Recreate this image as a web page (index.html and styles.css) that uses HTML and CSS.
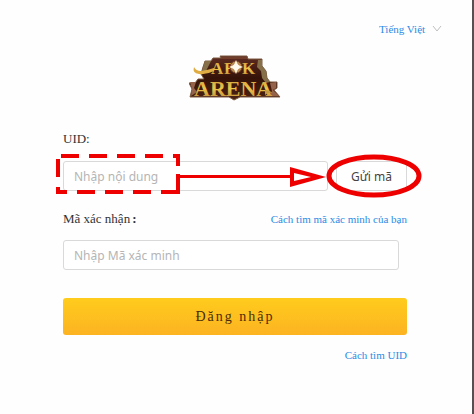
FILE: index.html
```html
<!DOCTYPE html>
<html lang="vi">
<head>
    <meta charset="UTF-8">
    <meta name="viewport" content="width=device-width, initial-scale=1.0">
    <title>AFK Arena</title>
    <link rel="stylesheet" href="styles.css">
</head>
<body>
    <main class="page">
        <div class="language">
            <select class="language-select" aria-label="Ngôn ngữ">
                <option>Tiếng Việt</option>
            </select>
            <svg class="chevron" width="10" height="8" viewBox="0 0 10 8" aria-hidden="true">
                <path d="M1 1l4 5 4-5" fill="none" stroke="#bfbfbf" stroke-width="1"/>
            </svg>
        </div>

        <svg class="logo" width="92" height="46" viewBox="0 0 92 46" role="img" aria-label="AFK Arena">
            <defs>
                <linearGradient id="gold" x1="0" y1="0" x2="0" y2="1">
                    <stop offset="0" stop-color="#c9963a"/>
                    <stop offset="0.5" stop-color="#ecc44a"/>
                    <stop offset="1" stop-color="#b98335"/>
                </linearGradient>
                <linearGradient id="wood" x1="0" y1="0" x2="0" y2="1">
                    <stop offset="0" stop-color="#5e2c22"/>
                    <stop offset="0.5" stop-color="#351208"/>
                    <stop offset="1" stop-color="#4c2414"/>
                </linearGradient>
            </defs>
            <!-- board -->
            <path d="M31 1h27l1 3h14v7l4 5 1 7 3 4h7v6l-3 2 6 7H51l-6 3-5-3H1l2-8-3-6h6l3-4h6l-3-5 2-7 2-6h6l2-3h8z" fill="url(#wood)" stroke="#7d5a40" stroke-width="1"/>
            <path d="M16 6h6l-5 10h-4zM69 5h4v6l4 5 1 7 3 4-4 1-4-5-1-7-4-4z" fill="#86704a"/>
            <path d="M1 27h6l-2 6 3 4-6 4 1-7zM81 28l6-1v6l-3 2 6 6H80l3-5z" fill="#94634a"/>
            <path d="M32 3h26" fill="none" stroke="#8b5238" stroke-width="1"/>
            <!-- swash of the first letter -->
            <path d="M25 16q-8 4-15 3-7-1-5-7 2 4 7 4 7-1 13-3z" fill="#dfad43"/>
            <g class="logo-text" fill="url(#gold)">
                <text x="22 35 53" y="19" font-size="17">AFK</text>
                <text x="5" y="41" font-size="22">ARENA</text>
            </g>
            <!-- emblem -->
            <circle cx="47" cy="12" r="6" fill="#b98750" stroke="#6f3d26" stroke-width="1"/>
            <path d="M47 5l2 5 5 2-5 2-2 5-2-5-5-2 5-2z" fill="#fff4db"/>
            <circle cx="47" cy="12" r="3" fill="#fffaf0"/>
            <path d="M76 35q5 0 7 3-4-1-7 2z" fill="#c29843"/>
        </svg>

        <form class="login-form">
            <label class="label" for="uid">UID:</label>
            <div class="uid-row">
                <div class="uid-field">
                    <input class="input" id="uid" type="text" placeholder="Nhập nội dung">
                    <svg class="mark-box" width="126" height="42" viewBox="0 0 126 42" aria-hidden="true">
                        <path d="M5 3h18M33 3h18M61 3h18M89 3h18M117 3h5v10M122 21v18h-17M95 39H77M67 39H49M39 39H21M11 39H2v-5M2 24V6" fill="none" stroke="#ee0000" stroke-width="4"/>
                    </svg>
                    <div class="mark-line"></div>
                    <svg class="mark-head" width="38" height="20" viewBox="0 0 38 20" aria-hidden="true">
                        <path d="M1 0v20l36-10z" fill="#ee0000"/>
                        <path d="M5 6v8l17-4z" fill="#ffffff"/>
                    </svg>
                </div>
                <div class="send">
                    <button class="send-button" type="button">Gửi mã</button>
                    <svg class="mark-ellipse" width="96" height="44" viewBox="0 0 96 44" aria-hidden="true">
                        <ellipse cx="48" cy="22" rx="45" ry="19" fill="none" stroke="#ee0000" stroke-width="5"/>
                    </svg>
                </div>
            </div>

            <div class="code-head">
                <label class="label" for="code">Mã xác nhận<span class="colon">:</span></label>
                <a class="link" href="#">Cách tìm mã xác minh của bạn</a>
            </div>
            <div class="code-row">
                <input class="input" id="code" type="text" placeholder="Nhập Mã xác minh">
            </div>

            <button class="login-button" type="submit">Đăng nhập</button>
            <a class="link uid-help" href="#">Cách tìm UID</a>
        </form>
    </main>
</body>
</html>
```
FILE: styles.css
```css
* {
    box-sizing: border-box;
}

body {
    margin: 0;
    background: #fefefe;
    color: #333;
    font-family: "Liberation Serif", serif;
    font-size: 13px;
    line-height: 20px;
}

.page {
    display: flex;
    flex-direction: column;
    min-height: 100vh;
    padding: 19px 65px 0 63px;
    border-right: 2px solid #555052;
}

.language {
    display: flex;
    align-items: center;
    align-self: flex-end;
    gap: 6px;
    margin-right: -35px;
}

.language-select {
    appearance: none;
    height: 20px;
    padding: 0;
    border: none;
    background: transparent;
    color: #2b8ce6;
    font-family: inherit;
    font-size: 11px;
}

.logo {
    align-self: center;
    margin-top: 16px;
}

.logo-text {
    font-family: "Liberation Serif", serif;
    font-weight: bold;
}

.login-form {
    display: flex;
    flex-direction: column;
    margin-top: 28px;
}

.colon {
    margin-left: 2px;
    font-weight: bold;
}

.uid-row {
    display: flex;
    gap: 8px;
    margin-top: 12px;
}

.uid-field {
    position: relative;
    flex: 1;
}

.input {
    display: block;
    width: 100%;
    height: 30px;
    padding: 0 10px;
    border: 1px solid #d9d9d9;
    border-radius: 3px;
    background: #fff;
    font-family: "Noto Sans", sans-serif;
    font-size: 12px;
}

.input::placeholder {
    color: #b5b5b5;
}

.send {
    position: relative;
}

.send-button {
    width: 71px;
    height: 30px;
    padding: 0;
    border: 1px solid #d9d9d9;
    border-radius: 3px;
    background: #fff;
    color: #444;
    font-family: "Noto Sans", sans-serif;
    font-size: 12px;
}

/* red guide marks over the UID row */
.mark-box,
.mark-line,
.mark-head,
.mark-ellipse {
    position: absolute;
    pointer-events: none;
}

.mark-box {
    top: -8px;
    left: -7px;
}

.mark-line {
    top: 14px;
    left: 117px;
    right: 37px;
    height: 3px;
    background: #e00;
}

.mark-head {
    top: 6px;
    right: 1px;
}

.mark-ellipse {
    top: -7px;
    left: -10px;
}

.code-head {
    display: flex;
    align-items: center;
    justify-content: space-between;
    margin-top: 18px;
}

.link {
    color: #2b8ce6;
    font-size: 11px;
    text-decoration: none;
}

.code-row {
    margin-top: 11px;
    padding-right: 8px;
}

.login-button {
    height: 37px;
    margin-top: 28px;
    border: none;
    border-radius: 3px;
    background: linear-gradient(#ffcc1c, #fcb322);
    color: #4a2c0a;
    font-family: inherit;
    font-size: 14px;
    letter-spacing: 2px;
    cursor: pointer;
}

.uid-help {
    align-self: flex-end;
    margin-top: 10px;
}
```
